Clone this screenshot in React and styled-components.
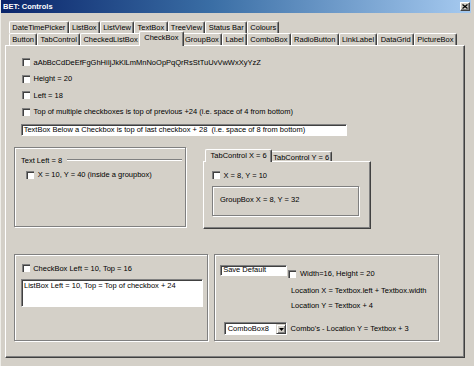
import React from "react";
import styled, { createGlobalStyle } from "styled-components";

const GlobalStyle = createGlobalStyle`
  html, body { margin: 0; padding: 0; background: #d4d0c8; }
  body {
    font-family: "Liberation Sans", Arial, sans-serif;
    font-size: 7.5px;
    color: #000;
  }
  * { box-sizing: border-box; }
`;

// #region Styles
const Window = styled.div`
  width: 474px;
  height: 366px;
  background: #d4d0c8;
  overflow: hidden;
  border-left: 1px solid #eeede8;
  display: flex;
  flex-direction: column;
`;

const TitleBar = styled.div`
  width: 471px;
  height: 13px;
  margin-left: -1px;
  padding: 0 1px 0 3px;
  display: flex;
  align-items: center;
  justify-content: space-between;
  background: linear-gradient(to right, #0a246a, #3a6ea5 45%, #a6caf0);
  color: #fff;
  font-weight: bold;
  font-size: 7.5px;
`;

const CloseButton = styled.div`
  width: 10px;
  height: 9px;
  background: #d4d0c8;
  border-top: 1px solid #fff;
  border-left: 1px solid #fff;
  border-right: 1px solid #404040;
  border-bottom: 1px solid #404040;
  box-shadow: inset -1px -1px 0 #808080;
  display: flex;
  align-items: center;
  justify-content: center;
`;

const Body = styled.div`
  padding-left: 4px;
  margin-top: 8px;
`;

const TabRow = styled.div`
  display: flex;
  align-items: flex-start;
  height: ${(p) => p.$h || 12}px;
  padding-left: ${(p) => p.$pl ?? 4}px;
`;

const Tab = styled.div`
  position: relative;
  height: ${(p) => (p.$selected ? p.$h + 3 : p.$h)}px;
  margin: ${(p) => (p.$selected ? `${-2 + (p.$drop || 0)}px -2px -1px -2px` : `${p.$drop || 0}px 0 0`)};
  padding: ${(p) => (p.$selected ? "1px 4.3px 0" : "1px 2.3px 0")};
  z-index: ${(p) => (p.$selected ? 2 : 1)};
  background: #d4d0c8;
  border-top: 1px solid #fff;
  border-left: 1px solid #fff;
  border-right: 1px solid #404040;
  box-shadow: inset -1px 0 0 #808080;
  border-radius: 2px 2px 0 0;
  line-height: 9px;
  white-space: nowrap;
`;

const TabPage = styled.div`
  position: relative;
  width: ${(p) => p.$w}px;
  height: ${(p) => p.$h}px;
  border-top: 1px solid #fff;
  border-left: 1px solid #fff;
  border-right: 1px solid #404040;
  border-bottom: 1px solid #404040;
  box-shadow: inset -1px -1px 0 #808080;
  padding: ${(p) => p.$pad || "0"};
`;

const CheckItem = styled.div`
  display: flex;
  align-items: center;
  gap: 3.5px;
  height: ${(p) => p.$h || 16.5}px;
  margin-left: ${(p) => p.$ml || 0}px;
  margin-top: ${(p) => p.$mt || 0}px;
  white-space: nowrap;
`;

const Box = styled.span`
  flex: none;
  width: 8px;
  height: 8px;
  background: #fff;
  border-top: 1px solid #808080;
  border-left: 1px solid #808080;
  box-shadow: inset 1px 1px 0 #404040;
`;

const TextBox = styled.div`
  width: ${(p) => p.$w}px;
  height: ${(p) => p.$h || 12}px;
  margin-left: ${(p) => p.$ml || 0}px;
  margin-top: ${(p) => p.$mt || 0}px;
  background: #fff;
  border-top: 1px solid #808080;
  border-left: 1px solid #808080;
  border-bottom: 1px solid #fff;
  border-right: 1px solid #fff;
  box-shadow: inset 1px 1px 0 #404040, 1px 1px 0 #d4d0c8;
  padding: ${(p) => p.$pad || "0 0 0 2px"};
  line-height: ${(p) => p.$lh || (p.$h || 12) - 3}px;
  white-space: nowrap;
  overflow: hidden;
  flex: none;
`;

const Group = styled.div`
  width: ${(p) => p.$w}px;
  height: ${(p) => p.$h}px;
  margin-left: ${(p) => p.$ml || 0}px;
  margin-top: ${(p) => p.$mt || 0}px;
  border: 1px solid #808080;
  box-shadow: inset 1px 1px 0 #fff, 1px 1px 0 #fff;
  padding: ${(p) => p.$pad || "0"};
  flex: none;
`;

const Heading = styled.div`
  display: flex;
  align-items: center;
  gap: 5px;
  height: 8px;
  margin-right: 3px;
  white-space: nowrap;
`;

const Rule = styled.span`
  flex: 1;
  height: 2px;
  border-top: 1px solid #808080;
  border-bottom: 1px solid #fff;
`;

const CheckList = styled.div`
  margin: 8px 0 0 16px;
`;

const SectionRow = styled.div`
  display: flex;
  align-items: flex-start;
  gap: ${(p) => p.$gap}px;
  margin-left: ${(p) => p.$ml}px;
  margin-top: ${(p) => p.$mt}px;
`;

const InnerTabs = styled.div`
  margin-top: 2.5px;
`;

const PlainText = styled.div`
  height: ${(p) => p.$h}px;
  line-height: ${(p) => p.$h}px;
  margin-left: ${(p) => p.$ml || 0}px;
  margin-top: ${(p) => p.$mt || 0}px;
  white-space: nowrap;
`;

const FieldRow = styled.div`
  display: flex;
  align-items: ${(p) => p.$align || "flex-start"};
  height: ${(p) => p.$h}px;
  margin-left: ${(p) => p.$ml || 0}px;
  margin-top: ${(p) => p.$mt || 0}px;
  gap: ${(p) => p.$gap || 0}px;
  white-space: nowrap;
`;

const Combo = styled.div`
  display: flex;
  width: 63px;
  height: 12.5px;
  background: #fff;
  border-top: 1px solid #808080;
  border-left: 1px solid #808080;
  border-bottom: 1px solid #fff;
  border-right: 1px solid #fff;
  box-shadow: inset 1px 1px 0 #404040;
  padding: 1px 0 0 1px;
`;

const ComboText = styled.span`
  flex: 1;
  padding-left: 1.5px;
  line-height: 9px;
`;

const DropButton = styled.span`
  width: 10px;
  height: 9.5px;
  background: #d4d0c8;
  border-top: 1px solid #d4d0c8;
  border-left: 1px solid #d4d0c8;
  border-right: 1px solid #404040;
  border-bottom: 1px solid #404040;
  box-shadow: inset 1px 1px 0 #fff, inset -1px -1px 0 #808080;
  display: flex;
  align-items: center;
  justify-content: center;
`;
// #endregion

const mainRow1 = ["DateTimePicker", "ListBox", "ListView", "TextBox", "TreeView", "Status Bar", "Colours"];
const mainRow2 = [
  "Button",
  "TabControl",
  "CheckedListBox",
  "CheckBox",
  "GroupBox",
  "Label",
  "ComboBox",
  "RadioButton",
  "LinkLabel",
  "DataGrid",
  "PictureBox",
];

const checks = [
  "aAbBcCdDeEfFgGhHiIjJkKlLmMnNoOpPqQrRsStTuUvVwWxXyYzZ",
  "Height = 20",
  "Left = 18",
  "Top of multiple checkboxes is top of previous +24 (i.e. space of 4 from bottom)",
];

function Check({ children, ...rest }) {
  return (
    <CheckItem {...rest}>
      <Box />
      <span>{children}</span>
    </CheckItem>
  );
}

export default function App() {
  return (
    <>
      <GlobalStyle />
      <Window>
        <TitleBar>
          <span>BET: Controls</span>
          <CloseButton>
            <svg width="6" height="5" viewBox="0 0 6 5">
              <path d="M0.5 0.5 L5.5 4.5 M5.5 0.5 L0.5 4.5" stroke="#000" strokeWidth="1.3" />
            </svg>
          </CloseButton>
        </TitleBar>
        <Body>
          <TabRow>
            {mainRow1.map((t) => (
              <Tab key={t} $h={12}>{t}</Tab>
            ))}
          </TabRow>
          <TabRow>
            {mainRow2.map((t) => (
              <Tab key={t} $h={12} $selected={t === "CheckBox"}>{t}</Tab>
            ))}
          </TabRow>
          <TabPage $w={460} $h={313}>
            <CheckList>
              {checks.map((c) => (
                <Check key={c}>{c}</Check>
              ))}
            </CheckList>
            <TextBox $w={326} $h={12} $ml={14.7} $mt={4.3}>
              TextBox Below a Checkbox is top of last checkbox + 28&nbsp; (i.e. space of 8 from bottom)
            </TextBox>

            <SectionRow $gap={17.3} $ml={8} $mt={10.7}>
              <Group $w={172} $h={80.5} $pad="8.5px 0 0 6px">
                <Heading>
                  <span>Text Left = 8</span>
                  <Rule />
                </Heading>
                <Check $ml={5.3} $mt={2}>X = 10, Y = 40 (inside a groupbox)</Check>
              </Group>

              <InnerTabs>
                <TabRow $h={12} $pl={4}>
                  <Tab $h={10} $selected $drop={2}>TabControl X = 6</Tab>
                  <Tab $h={10} $drop={2}>TabControl Y = 6</Tab>
                </TabRow>
                <TabPage $w={168} $h={67.5} $pad="4.5px 0 0 7.7px">
                  <Check>X = 8, Y = 10</Check>
                  <Group $w={147} $h={29.5} $mt={3} $pad="8px 0 0 7px">
                    GroupBox X = 8, Y = 32
                  </Group>
                </TabPage>
              </InnerTabs>
            </SectionRow>

            <SectionRow $gap={6} $ml={8} $mt={25}>
              <Group $w={193.5} $h={87} $pad="5px 0 0 6.7px">
                <Check $h={16.5}>CheckBox Left = 10, Top = 16</Check>
                <TextBox $w={182} $h={28} $ml={-0.7} $mt={2.3} $lh={9} $pad="1px 0 0 2px">
                  ListBox Left = 10, Top = Top of checkbox + 24
                </TextBox>
              </Group>

              <Group $w={225.5} $h={87} $pad="9.7px 0 0 5.7px">
                <FieldRow $h={13}>
                  <TextBox $w={67} $h={11.5}>Save Default</TextBox>
                  <Check $h={8} $ml={1.3} $mt={5.3}>Width=16, Height = 20</Check>
                </FieldRow>
                <PlainText $h={14.6} $ml={70.7} $mt={6.4}>
                  Location X = Textbox.left + Textbox.width
                </PlainText>
                <PlainText $h={14.6} $ml={70.7}>Location Y = Textbox + 4</PlainText>
                <FieldRow $h={12.5} $ml={4} $mt={9} $gap={3.4} $align="center">
                  <Combo>
                    <ComboText>ComboBox8</ComboText>
                    <DropButton>
                      <svg width="5" height="3" viewBox="0 0 5 3">
                        <path d="M0 0 L5 0 L2.5 3 Z" fill="#000" />
                      </svg>
                    </DropButton>
                  </Combo>
                  <span>Combo's - Location Y = Textbox + 3</span>
                </FieldRow>
              </Group>
            </SectionRow>
          </TabPage>
        </Body>
      </Window>
    </>
  );
}
